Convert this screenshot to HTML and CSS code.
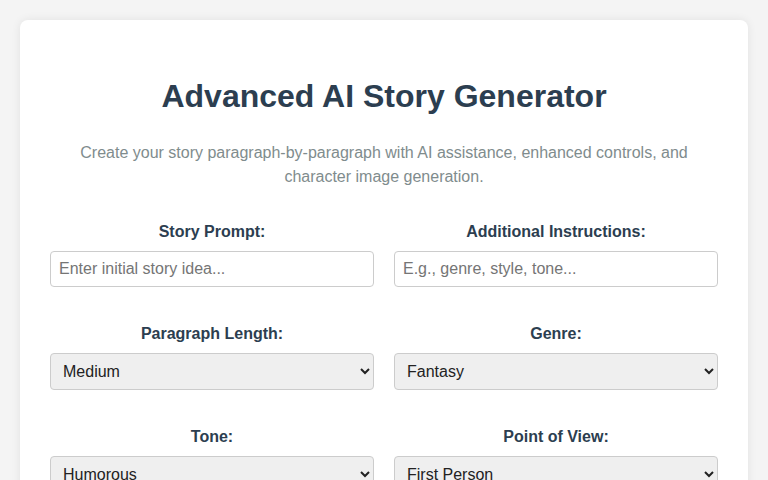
FILE: index.html
```html
<!DOCTYPE html>
<html lang="en">
<head>
<meta charset="utf-8">
<title>Advanced AI Story Generator</title>
<link rel="stylesheet" href="styles.css">
</head>
<body>
<div class="card">
  <h1 class="title">Advanced AI Story Generator</h1>
  <p class="subtitle">Create your story paragraph-by-paragraph with AI assistance, enhanced controls, and character image generation.</p>
  <div class="form-grid">
    <div class="group">
      <label class="label" for="prompt">Story Prompt:</label>
      <input class="field" id="prompt" type="text" placeholder="Enter initial story idea...">
    </div>
    <div class="group">
      <label class="label" for="instr">Additional Instructions:</label>
      <input class="field" id="instr" type="text" placeholder="E.g., genre, style, tone...">
    </div>
    <div class="group">
      <label class="label" for="len">Paragraph Length:</label>
      <select class="select" id="len">
        <option>Short</option>
        <option selected>Medium</option>
        <option>Long</option>
      </select>
    </div>
    <div class="group">
      <label class="label" for="genre">Genre:</label>
      <select class="select" id="genre">
        <option selected>Fantasy</option>
        <option>Sci-Fi</option>
        <option>Mystery</option>
      </select>
    </div>
    <div class="group">
      <label class="label" for="tone">Tone:</label>
      <select class="select" id="tone">
        <option selected>Humorous</option>
        <option>Serious</option>
        <option>Dark</option>
      </select>
    </div>
    <div class="group">
      <label class="label" for="pov">Point of View:</label>
      <select class="select" id="pov">
        <option selected>First Person</option>
        <option>Second Person</option>
        <option>Third Person</option>
      </select>
    </div>
  </div>
</div>
</body>
</html>
```

FILE: styles.css
```css
* {
  box-sizing: border-box;
}

html, body {
  margin: 0;
  padding: 0;
}

body {
  background: #f4f4f4;
  font-family: "Liberation Sans", Arial, sans-serif;
  color: #333;
  padding: 20px;
}

.card {
  background: #ffffff;
  border-radius: 8px;
  box-shadow: 0 0 10px rgba(0, 0, 0, 0.08);
  padding: 30px 30px 40px;
}

.title {
  margin: 28px 0 26px;
  font-size: 32px;
  line-height: 37px;
  font-weight: bold;
  text-align: center;
  color: #2c3e50;
}

.subtitle {
  margin: 0 0 34px;
  font-size: 16px;
  line-height: 24px;
  text-align: center;
  color: #7f8c8d;
}

.form-grid {
  display: grid;
  grid-template-columns: 1fr 1fr;
  column-gap: 20px;
  row-gap: 38px;
}

.group {
  display: flex;
  flex-direction: column;
}

.label {
  display: block;
  margin-bottom: 10px;
  font-size: 16px;
  line-height: 18px;
  font-weight: bold;
  text-align: center;
  color: #2c3e50;
}

.field {
  height: 36px;
  padding: 0 8px;
  border: 1px solid #cccccc;
  border-radius: 4px;
  font-family: "Liberation Sans", Arial, sans-serif;
  font-size: 16px;
  color: #333;
  background: #ffffff;
}

.field::placeholder {
  color: #757575;
}

.select {
  height: 37px;
  padding: 0 8px;
  border: 1px solid #cccccc;
  border-radius: 4px;
  font-family: "Liberation Sans", Arial, sans-serif;
  font-size: 16px;
  color: #222;
  background-color: #efefef;
}
```
